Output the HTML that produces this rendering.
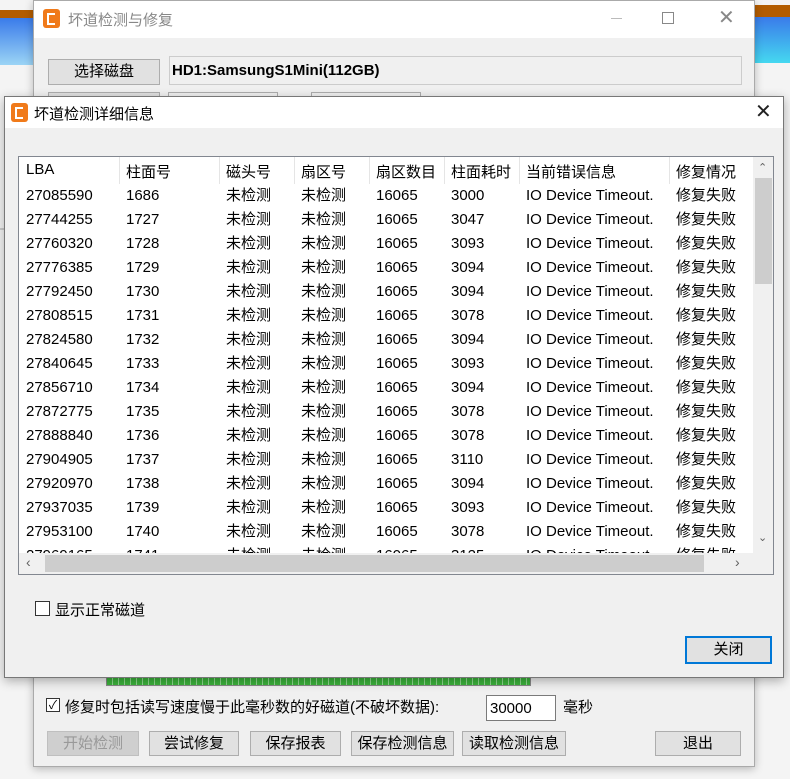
<!DOCTYPE html>
<html><head><meta charset="utf-8"><style>
*{margin:0;padding:0;box-sizing:border-box}
body{width:790px;height:779px;position:relative;overflow:hidden;background:#f4f4f4;font-family:"Liberation Sans","Noto Sans CJK SC",sans-serif;font-size:15px;color:#000}
.abs{position:absolute}
.btn{position:absolute;background:#e1e1e1;border:1px solid #adadad;text-align:center;font-size:15px;line-height:24px}
.icon{position:absolute;width:17px;height:19px;background:#f07a1a;border-radius:3px}
.icon:after{content:"";position:absolute;left:4px;top:4px;width:6px;height:8px;border:2px solid #fff;border-right:none}
.row{position:absolute;left:0;height:24px;line-height:24px;white-space:nowrap}
.row span{position:absolute}
</style></head><body>
<!-- desktop -->
<div class="abs" style="left:0;top:10px;width:33px;height:8px;background:#b35c00"></div>
<div class="abs" style="left:0;top:18px;width:33px;height:47px;background:linear-gradient(#3a7bea,#9bd4f5)"></div>
<div class="abs" style="left:755px;top:5px;width:35px;height:12px;background:#b35c00"></div>
<div class="abs" style="left:755px;top:17px;width:35px;height:46px;background:linear-gradient(#3a7bea,#45d8f0)"></div>
<div class="abs" style="left:0;top:228px;width:5px;height:2px;background:#ccc"></div>
<!-- main window -->
<div class="abs" style="left:33px;top:0;width:722px;height:767px;background:#f0f0f0;border:1px solid #aaa;box-shadow:0 2px 8px rgba(0,0,0,.25)">
 <div class="abs" style="left:0;top:0;width:720px;height:37px;background:#fff"></div>
 <div class="icon" style="left:9px;top:8px"></div>
 <div class="abs" style="left:34px;top:8px;color:#888;font-size:15px">坏道检测与修复</div>
 <div class="abs" style="left:577px;top:17px;width:11px;height:1px;background:#bbb"></div>
 <div class="abs" style="left:628px;top:11px;width:12px;height:12px;border:1px solid #888"></div>
 <div class="abs" style="left:684px;top:4px;color:#888;font-size:20px">✕</div>
 <div class="btn" style="left:14px;top:58px;width:112px;height:26px">选择磁盘</div>
 <div class="abs" style="left:135px;top:55px;width:573px;height:29px;border:1px solid #ccc;background:#f0f0f0;font-weight:bold;padding:5px 2px;font-size:15px">HD1:SamsungS1Mini(112GB)</div>
 <div class="btn" style="left:14px;top:91px;width:112px;height:26px"></div>
 <div class="btn" style="left:134px;top:91px;width:110px;height:26px;background:#f0f0f0"></div>
 <div class="btn" style="left:277px;top:91px;width:110px;height:26px;background:#f0f0f0"></div>
 <div class="abs" style="left:72px;top:676px;width:425px;height:9px;border:1px solid #888;border-top:none;background:repeating-linear-gradient(90deg,#3bb33b 0 5px,#8fd88f 5px 6px)"></div>
 <div class="abs" style="left:12px;top:697px;width:14px;height:14px;border:1px solid #333;background:#fff;font-size:12px;line-height:12px;text-align:center">✓</div>
 <div class="abs" style="left:31px;top:695px">修复时包括读写速度慢于此毫秒数的好磁道(不破坏数据):</div>
 <div class="abs" style="left:452px;top:694px;width:70px;height:26px;border:1px solid #7a7a7a;background:#fff;padding:4px 3px">30000</div>
 <div class="abs" style="left:529px;top:695px">毫秒</div>
 <div class="btn" style="left:13px;top:730px;width:92px;height:25px;background:#cfcfcf;border-color:#bfbfbf;color:#999">开始检测</div>
 <div class="btn" style="left:115px;top:730px;width:90px;height:25px">尝试修复</div>
 <div class="btn" style="left:216px;top:730px;width:91px;height:25px">保存报表</div>
 <div class="btn" style="left:317px;top:730px;width:103px;height:25px">保存检测信息</div>
 <div class="btn" style="left:428px;top:730px;width:104px;height:25px">读取检测信息</div>
 <div class="btn" style="left:621px;top:730px;width:86px;height:25px">退出</div>
</div>
<!-- dialog -->
<div class="abs" style="left:4px;top:96px;width:780px;height:582px;background:#f0f0f0;border:1px solid #777;box-shadow:0 3px 10px rgba(0,0,0,.3)">
 <div class="abs" style="left:0;top:0;width:778px;height:31px;background:#fff"></div>
 <div class="icon" style="left:6px;top:6px"></div>
 <div class="abs" style="left:29px;top:6px">坏道检测详细信息</div>
 <div class="abs" style="left:750px;top:2px;font-size:20px;color:#222">✕</div>
 <div class="abs" style="left:13px;top:59px;width:756px;height:419px;border:1px solid #828790;background:#fff;overflow:hidden">
  <div class="abs" style="left:0;top:0;width:734px;height:27px;font-size:15px">
   <span class="abs" style="left:7px;top:4px">LBA</span>
   <span class="abs" style="left:107px;top:4px">柱面号</span>
   <span class="abs" style="left:207px;top:4px">磁头号</span>
   <span class="abs" style="left:282px;top:4px">扇区号</span>
   <span class="abs" style="left:357px;top:4px">扇区数目</span>
   <span class="abs" style="left:432px;top:4px">柱面耗时</span>
   <span class="abs" style="left:507px;top:4px">当前错误信息</span>
   <span class="abs" style="left:657px;top:4px">修复情况</span>
   <div class="abs" style="left:100px;top:0;width:1px;height:27px;background:#e5e5e5"></div>
   <div class="abs" style="left:200px;top:0;width:1px;height:27px;background:#e5e5e5"></div>
   <div class="abs" style="left:275px;top:0;width:1px;height:27px;background:#e5e5e5"></div>
   <div class="abs" style="left:350px;top:0;width:1px;height:27px;background:#e5e5e5"></div>
   <div class="abs" style="left:425px;top:0;width:1px;height:27px;background:#e5e5e5"></div>
   <div class="abs" style="left:500px;top:0;width:1px;height:27px;background:#e5e5e5"></div>
   <div class="abs" style="left:650px;top:0;width:1px;height:27px;background:#e5e5e5"></div>
  </div>
  <div id="rows" class="abs" style="left:0;top:27px;width:734px;height:369px;overflow:hidden">
   <div class="row" style="top:0"><span style="left:7px">27085590</span><span style="left:107px">1686</span><span style="left:207px">未检测</span><span style="left:282px">未检测</span><span style="left:357px">16065</span><span style="left:432px">3000</span><span style="left:507px">IO Device Timeout.</span><span style="left:657px">修复失败</span></div>
   <div class="row" style="top:24px"><span style="left:7px">27744255</span><span style="left:107px">1727</span><span style="left:207px">未检测</span><span style="left:282px">未检测</span><span style="left:357px">16065</span><span style="left:432px">3047</span><span style="left:507px">IO Device Timeout.</span><span style="left:657px">修复失败</span></div>
   <div class="row" style="top:48px"><span style="left:7px">27760320</span><span style="left:107px">1728</span><span style="left:207px">未检测</span><span style="left:282px">未检测</span><span style="left:357px">16065</span><span style="left:432px">3093</span><span style="left:507px">IO Device Timeout.</span><span style="left:657px">修复失败</span></div>
   <div class="row" style="top:72px"><span style="left:7px">27776385</span><span style="left:107px">1729</span><span style="left:207px">未检测</span><span style="left:282px">未检测</span><span style="left:357px">16065</span><span style="left:432px">3094</span><span style="left:507px">IO Device Timeout.</span><span style="left:657px">修复失败</span></div>
   <div class="row" style="top:96px"><span style="left:7px">27792450</span><span style="left:107px">1730</span><span style="left:207px">未检测</span><span style="left:282px">未检测</span><span style="left:357px">16065</span><span style="left:432px">3094</span><span style="left:507px">IO Device Timeout.</span><span style="left:657px">修复失败</span></div>
   <div class="row" style="top:120px"><span style="left:7px">27808515</span><span style="left:107px">1731</span><span style="left:207px">未检测</span><span style="left:282px">未检测</span><span style="left:357px">16065</span><span style="left:432px">3078</span><span style="left:507px">IO Device Timeout.</span><span style="left:657px">修复失败</span></div>
   <div class="row" style="top:144px"><span style="left:7px">27824580</span><span style="left:107px">1732</span><span style="left:207px">未检测</span><span style="left:282px">未检测</span><span style="left:357px">16065</span><span style="left:432px">3094</span><span style="left:507px">IO Device Timeout.</span><span style="left:657px">修复失败</span></div>
   <div class="row" style="top:168px"><span style="left:7px">27840645</span><span style="left:107px">1733</span><span style="left:207px">未检测</span><span style="left:282px">未检测</span><span style="left:357px">16065</span><span style="left:432px">3093</span><span style="left:507px">IO Device Timeout.</span><span style="left:657px">修复失败</span></div>
   <div class="row" style="top:192px"><span style="left:7px">27856710</span><span style="left:107px">1734</span><span style="left:207px">未检测</span><span style="left:282px">未检测</span><span style="left:357px">16065</span><span style="left:432px">3094</span><span style="left:507px">IO Device Timeout.</span><span style="left:657px">修复失败</span></div>
   <div class="row" style="top:216px"><span style="left:7px">27872775</span><span style="left:107px">1735</span><span style="left:207px">未检测</span><span style="left:282px">未检测</span><span style="left:357px">16065</span><span style="left:432px">3078</span><span style="left:507px">IO Device Timeout.</span><span style="left:657px">修复失败</span></div>
   <div class="row" style="top:240px"><span style="left:7px">27888840</span><span style="left:107px">1736</span><span style="left:207px">未检测</span><span style="left:282px">未检测</span><span style="left:357px">16065</span><span style="left:432px">3078</span><span style="left:507px">IO Device Timeout.</span><span style="left:657px">修复失败</span></div>
   <div class="row" style="top:264px"><span style="left:7px">27904905</span><span style="left:107px">1737</span><span style="left:207px">未检测</span><span style="left:282px">未检测</span><span style="left:357px">16065</span><span style="left:432px">3110</span><span style="left:507px">IO Device Timeout.</span><span style="left:657px">修复失败</span></div>
   <div class="row" style="top:288px"><span style="left:7px">27920970</span><span style="left:107px">1738</span><span style="left:207px">未检测</span><span style="left:282px">未检测</span><span style="left:357px">16065</span><span style="left:432px">3094</span><span style="left:507px">IO Device Timeout.</span><span style="left:657px">修复失败</span></div>
   <div class="row" style="top:312px"><span style="left:7px">27937035</span><span style="left:107px">1739</span><span style="left:207px">未检测</span><span style="left:282px">未检测</span><span style="left:357px">16065</span><span style="left:432px">3093</span><span style="left:507px">IO Device Timeout.</span><span style="left:657px">修复失败</span></div>
   <div class="row" style="top:336px"><span style="left:7px">27953100</span><span style="left:107px">1740</span><span style="left:207px">未检测</span><span style="left:282px">未检测</span><span style="left:357px">16065</span><span style="left:432px">3078</span><span style="left:507px">IO Device Timeout.</span><span style="left:657px">修复失败</span></div>
   <div class="row" style="top:360px"><span style="left:7px">27969165</span><span style="left:107px">1741</span><span style="left:207px">未检测</span><span style="left:282px">未检测</span><span style="left:357px">16065</span><span style="left:432px">3125</span><span style="left:507px">IO Device Timeout.</span><span style="left:657px">修复失败</span></div>
  </div>
  <!-- vertical scrollbar -->
  <div class="abs" style="left:734px;top:0;width:20px;height:396px;background:#f0f0f0">
   <div class="abs" style="left:5px;top:4px;font-size:11px;color:#606060">⌃</div>
   <div class="abs" style="left:2px;top:21px;width:17px;height:106px;background:#cdcdcd"></div>
   <div class="abs" style="left:5px;top:374px;font-size:11px;color:#606060">⌄</div>
  </div>
  <!-- horizontal scrollbar -->
  <div class="abs" style="left:0;top:396px;width:754px;height:21px;background:#f0f0f0">
   <div class="abs" style="left:7px;top:1px;font-size:14px;color:#606060">‹</div>
   <div class="abs" style="left:26px;top:2px;width:659px;height:17px;background:#cdcdcd"></div>
   <div class="abs" style="left:716px;top:1px;font-size:14px;color:#606060">›</div>
  </div>
 </div>
 <div class="abs" style="left:30px;top:504px;width:15px;height:15px;border:1px solid #333;background:#fff"></div>
 <div class="abs" style="left:50px;top:502px">显示正常磁道</div>
 <div class="btn" style="left:680px;top:539px;width:87px;height:28px;border:2px solid #0078d7;line-height:24px">关闭</div>
</div>
</body></html>
